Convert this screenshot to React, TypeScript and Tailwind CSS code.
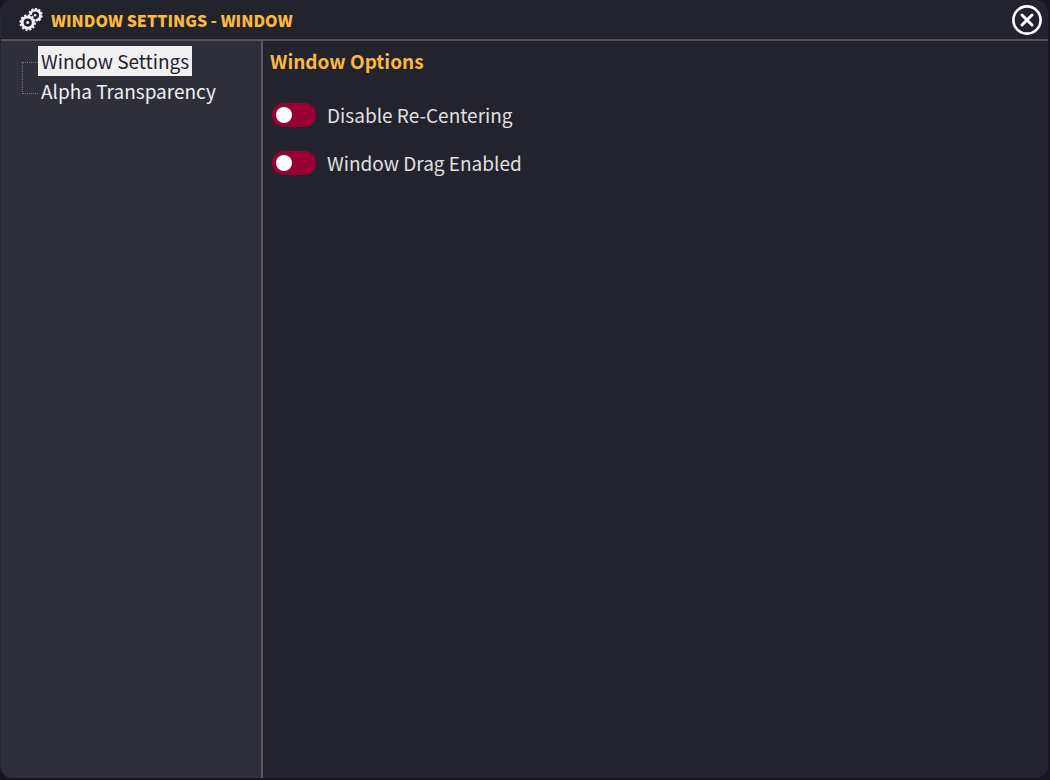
import React, { useState } from "react";

interface Page {
    id: string;
    label: string;
}

interface ToggleProps {
    label: string;
    checked: boolean;
    onChange: (value: boolean) => void;
}

const pages: Page[] = [
    { id: "window", label: "Window Settings" },
    { id: "alpha", label: "Alpha Transparency" },
];

const GearsIcon: React.FC = () => (
    <svg className="h-6 w-6" viewBox="0 0 24 24" fill="none" stroke="#f0f0f0" aria-hidden="true">
        {/* Small gear, cut off where the big one sits */}
        <path d="M11.4 6.8A5 5 0 1 1 17 12.2" strokeWidth="2.6" />
        <path d="M10.3 5A6.5 6.5 0 1 1 18.4 13.3" strokeWidth="1.6" strokeDasharray="2.2 1.5" />
        <circle cx="16.1" cy="7.3" r="1.2" fill="#f0f0f0" stroke="none" />
        {/* Big gear */}
        <circle cx="8.7" cy="14.6" r="5.6" strokeWidth="3" />
        <circle cx="8.7" cy="14.6" r="7.5" strokeWidth="1.6" strokeDasharray="2.3 1.627" />
        <circle cx="8.7" cy="14.6" r="1.5" fill="#f0f0f0" stroke="none" />
    </svg>
);

const CloseIcon: React.FC = () => (
    <svg className="h-8 w-8" viewBox="0 0 32 32" fill="none" stroke="#ffffff" aria-hidden="true">
        <circle cx="16" cy="16" r="13.6" strokeWidth="2.6" />
        <path d="M11 11l10 10M21 11L11 21" strokeWidth="3" strokeLinecap="round" />
    </svg>
);

const Toggle: React.FC<ToggleProps> = ({ label, checked, onChange }) => (
    <label className="flex h-6 w-fit cursor-pointer items-center gap-[11px]">
        <input
            type="checkbox"
            checked={checked}
            onChange={(e) => onChange(e.target.checked)}
            className="h-6 w-11 shrink-0 cursor-pointer appearance-none rounded-full bg-[#990033] before:mt-1 before:ml-1 before:block before:size-4 before:rounded-full before:bg-white checked:bg-green-700 checked:before:ml-6"
        />
        <span>{label}</span>
    </label>
);

const App: React.FC = () => {
    const [activePage, setActivePage] = useState<string>("window");
    const [disableCentering, setDisableCentering] = useState<boolean>(false);
    const [dragEnabled, setDragEnabled] = useState<boolean>(false);

    return (
        <div className="flex min-h-screen flex-col bg-[#171522] pr-0.5 pb-0.5 font-['Noto_Sans_CJK_SC','Noto_Sans',sans-serif] text-[19px] text-[#e0e0e0]">
            <div className="flex grow flex-col overflow-hidden rounded-xl border-l border-[#272631] bg-[#23232e]">
                {/* Title bar */}
                <header className="flex h-[39px] shrink-0 items-center justify-between pt-px pr-[5px] pl-[18px]">
                    <div className="flex items-center gap-2">
                        <GearsIcon />
                        <h1 className="text-base leading-6 font-black text-[#fbb841]">WINDOW SETTINGS - WINDOW</h1>
                    </div>
                    <button type="button" aria-label="Close" className="cursor-pointer">
                        <CloseIcon />
                    </button>
                </header>

                <div className="flex grow border-t-2 border-[#55545c]">
                    {/* Page tree */}
                    <nav className="w-[262px] shrink-0 border-r-2 border-[#5b5a62] bg-[#2f2f3a] pt-[5px] pl-[21px]">
                        <ul className="relative pl-4">
                            <li
                                aria-hidden="true"
                                className="absolute top-4 left-0 h-8 w-4 border-y border-l border-dotted border-[#777680]"
                            />
                            {pages.map((page) => (
                                <li key={page.id} className="flex h-[30px]">
                                    <button
                                        type="button"
                                        onClick={() => setActivePage(page.id)}
                                        className={
                                            page.id === activePage
                                                ? "cursor-pointer bg-[#f0f0f0] px-[3px] leading-[30px] text-[#23222e]"
                                                : "cursor-pointer px-[3px] leading-[30px] text-[#f0f0f0]"
                                        }
                                    >
                                        {page.label}
                                    </button>
                                </li>
                            ))}
                        </ul>
                    </nav>

                    <main className="grow px-[7px] pt-[7px]">
                        <h2 className="leading-[26px] font-bold text-[#fbb841]">Window Options</h2>
                        <div className="mt-[29px] ml-0.5 flex flex-col gap-6">
                            <Toggle
                                label="Disable Re-Centering"
                                checked={disableCentering}
                                onChange={setDisableCentering}
                            />
                            <Toggle label="Window Drag Enabled" checked={dragEnabled} onChange={setDragEnabled} />
                        </div>
                    </main>
                </div>
            </div>
        </div>
    );
};

export default App;
